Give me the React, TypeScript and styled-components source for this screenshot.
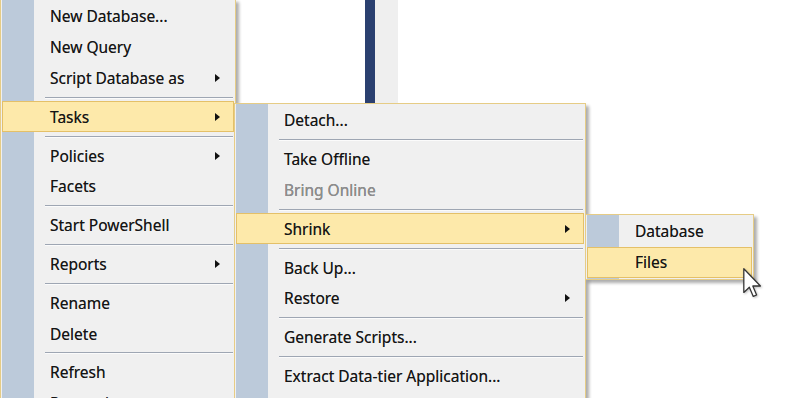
import React from "react";
import styled, { createGlobalStyle } from "styled-components";

type ItemT =
  | { kind: "item"; label: string; sub?: boolean; active?: boolean; disabled?: boolean }
  | { kind: "sep" };

const item = (label: string, opts: { sub?: boolean; active?: boolean; disabled?: boolean } = {}): ItemT => ({
  kind: "item",
  label,
  ...opts,
});
const sep: ItemT = { kind: "sep" };

const mainMenu: ItemT[] = [
  item("New Database..."),
  item("New Query"),
  item("Script Database as", { sub: true }),
  sep,
  item("Tasks", { sub: true, active: true }),
  sep,
  item("Policies", { sub: true }),
  item("Facets"),
  sep,
  item("Start PowerShell"),
  sep,
  item("Reports", { sub: true }),
  sep,
  item("Rename"),
  item("Delete"),
  sep,
  item("Refresh"),
  item("Properties"),
];

const tasksMenu: ItemT[] = [
  item("Detach..."),
  sep,
  item("Take Offline"),
  item("Bring Online", { disabled: true }),
  sep,
  item("Shrink", { sub: true, active: true }),
  sep,
  item("Back Up..."),
  item("Restore", { sub: true }),
  sep,
  item("Generate Scripts..."),
  sep,
  item("Extract Data-tier Application..."),
  item("Register as Data-tier Application..."),
];

const shrinkMenu: ItemT[] = [item("Database"), item("Files", { active: true })];

const GlobalStyle = createGlobalStyle`
  html, body {
    margin: 0;
    padding: 0;
    background: #ffffff;
    overflow: hidden;
  }
  body {
    font-family: "Noto Sans", "Open Sans", sans-serif;
  }
`;

const Desktop = styled.div`
  position: relative;
  width: 800px;
  height: 398px;
  overflow: hidden;
  display: flex;
  background: #ffffff;
`;

const Pane = styled.div<{ $w: number; $bg: string }>`
  flex: 0 0 ${(p) => p.$w}px;
  height: 100%;
  background: ${(p) => p.$bg};
`;

const Menu = styled.div<{ $left: number; $top: number; $width: number }>`
  position: absolute;
  left: ${(p) => p.$left}px;
  top: ${(p) => p.$top}px;
  width: ${(p) => p.$width}px;
  box-sizing: border-box;
  border: 1px solid #e6cc85;
  padding: 1px;
  background: linear-gradient(
    to right,
    #f0f0f0 0 1px,
    #bccada 1px 33px,
    #f0f0f0 33px
  );
  background-clip: padding-box;
  box-shadow: 3px 3px 3px rgba(0, 0, 0, 0.32);
  display: flex;
  flex-direction: column;
`;

const Row = styled.div<{ $active?: boolean; $disabled?: boolean }>`
  height: 30.8px;
  box-sizing: border-box;
  display: flex;
  align-items: center;
  padding-left: 47px;
  padding-right: 13px;
  border: 1px solid ${(p) => (p.$active ? "#e4c068" : "transparent")};
  background: ${(p) => (p.$active ? "#fde9aa" : "transparent")};
  color: ${(p) => (p.$disabled ? "#8e8e8e" : "#141414")};
  font-size: 15.5px;
  white-space: nowrap;
`;

const Label = styled.span`
  flex: 1;
  text-shadow: 0 0 0.4px rgba(20, 20, 20, 0.6);
`;

const Arrow = styled.span`
  width: 0;
  height: 0;
  border-left: 5px solid #111111;
  border-top: 4.5px solid transparent;
  border-bottom: 4.5px solid transparent;
`;

const Separator = styled.div`
  height: 8px;
  display: flex;
  align-items: center;
  padding-left: 43px;
  padding-right: 1px;

  &::before {
    content: "";
    flex: 1;
    height: 1px;
    background: #9ea6b3;
    box-shadow: 0 1px 0 #fbfbfb;
  }
`;

const Cursor = styled.svg`
  position: absolute;
  left: 743px;
  top: 268px;
  filter: drop-shadow(1px 1px 1px rgba(0, 0, 0, 0.25));
`;

const MenuList: React.FC<{ items: ItemT[]; left: number; top: number; width: number }> = ({
  items,
  left,
  top,
  width,
}) => (
  <Menu $left={left} $top={top} $width={width}>
    {items.map((it, i) =>
      it.kind === "sep" ? (
        <Separator key={i} />
      ) : (
        <Row key={i} $active={it.active} $disabled={it.disabled}>
          <Label>{it.label}</Label>
          {it.sub && <Arrow />}
        </Row>
      )
    )}
  </Menu>
);

export default function App() {
  return (
    <>
      <GlobalStyle />
      <Desktop>
        <Pane $w={365} $bg="#ffffff" />
        <Pane $w={10} $bg="#2b4070" />
        <Pane $w={23} $bg="#efefef" />
        <MenuList items={mainMenu} left={0} top={-1} width={236} />
        <MenuList items={tasksMenu} left={234} top={103} width={352} />
        <MenuList items={shrinkMenu} left={585} top={214} width={169} />
        <Cursor width="19" height="30" viewBox="0 0 12 19">
          <path
            d="M0.5 0.5 L0.5 15.5 L4 12.2 L6.5 18 L8.6 17.1 L6.2 11.4 L11 11.4 Z"
            fill="#ffffff"
            stroke="#333333"
            strokeWidth="0.8"
            strokeLinejoin="round"
          />
        </Cursor>
      </Desktop>
    </>
  );
}
